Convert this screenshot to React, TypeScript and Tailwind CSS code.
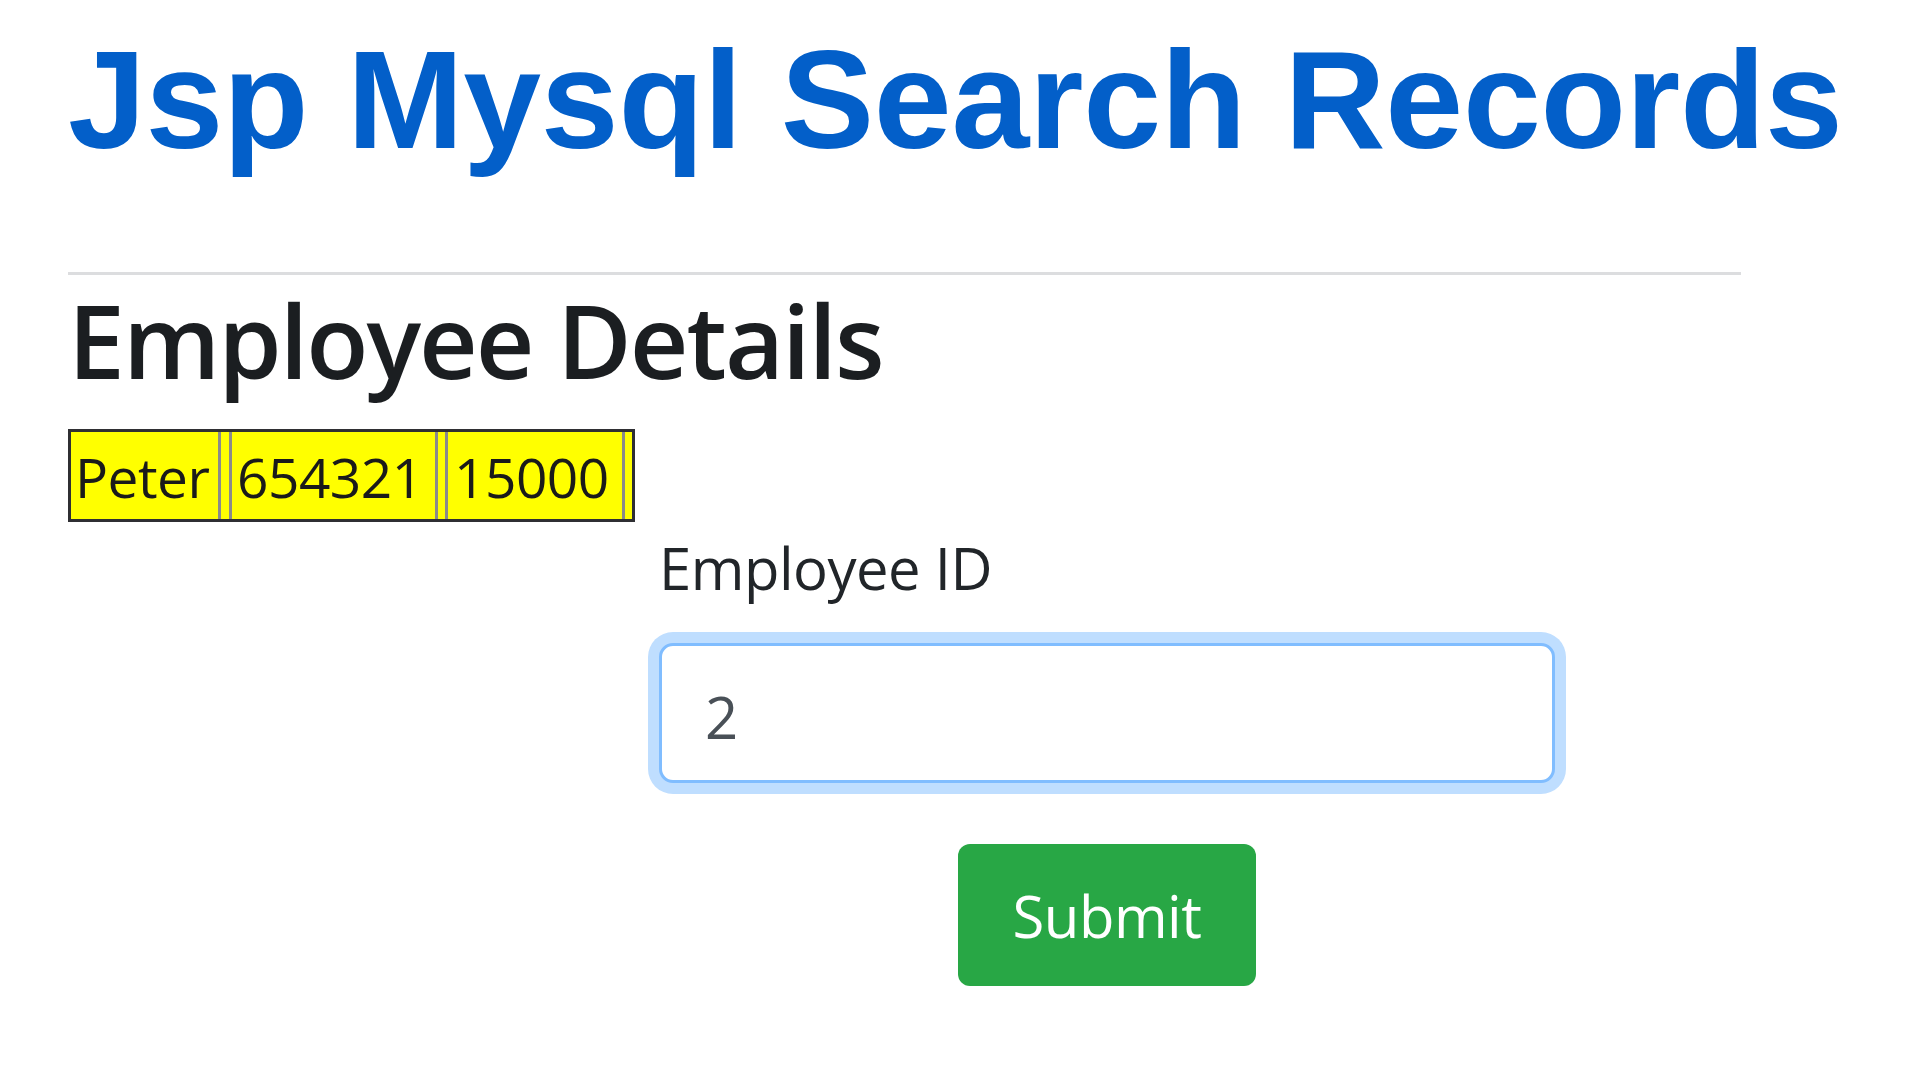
const employee = { name: "Peter", phone: "654321", salary: "15000" };

const bodyFont = { fontFamily: '"Open Sans", "Noto Sans", sans-serif' };

export default function App() {
  return (
    <div className="min-h-screen bg-white px-[68px] text-[#212529]" style={bodyFont}>
      <h1
        className="mt-[30px] text-[140px] leading-[140px] font-bold tracking-[-0.3px] whitespace-nowrap text-[#035fc9]"
        style={{ fontFamily: '"Liberation Sans", Arial, sans-serif' }}
      >
        Jsp Mysql Search Records
      </h1>

      <div className="mt-[102px] h-[3px] w-[1673px] bg-[#dcdddf]" />

      <h2 className="mt-[14px] text-[102px] leading-[102px] font-semibold tracking-[-2px] text-[#1b1e21]">
        Employee Details
      </h2>

      {/* result row */}
      <div className="mt-[38px] flex w-[567px] border-[3px] border-[#2f2f33] bg-[#ffff00] text-[55px] leading-[84px] text-[#1a1a1a]">
        <div className="h-[87px] w-[150px] border-r-[3px] border-[#8a8a8a] pt-[3px] pl-[4px] tracking-[-0.5px]">
          {employee.name}
        </div>
        <div className="ml-[8px] h-[87px] w-[209px] border-x-[3px] border-[#8a8a8a] pt-[3px] pl-[5px] tracking-[-0.5px]">
          {employee.phone}
        </div>
        <div className="ml-[7px] h-[87px] w-[180px] border-x-[3px] border-[#8a8a8a] pt-[3px] pl-[6px] tracking-[-0.5px]">
          {employee.salary}
        </div>
      </div>

      {/* search form */}
      <form className="ml-[591px] flex w-[896px] flex-col" onSubmit={(e) => e.preventDefault()}>
        <label className="mt-[6px] text-[58px] leading-[80px] tracking-[-0.5px] text-[#212529]">Employee ID</label>
        <input
          readOnly
          value="2"
          className="mt-[35px] box-border h-[140px] w-[896px] rounded-[14px] border-[3px] border-[#80bdff] bg-white pt-[7px] pl-[43px] text-[58px] text-[#495057] shadow-[0_0_0_11px_#bfdeff] outline-none"
          style={bodyFont}
        />
        <div className="mt-[61px] flex justify-center">
          <button
            type="submit"
            className="h-[142px] w-[298px] rounded-[12px] bg-[#28a745] text-[58px] tracking-[-0.5px] text-white"
            style={bodyFont}
          >
            Submit
          </button>
        </div>
      </form>
    </div>
  );
}
